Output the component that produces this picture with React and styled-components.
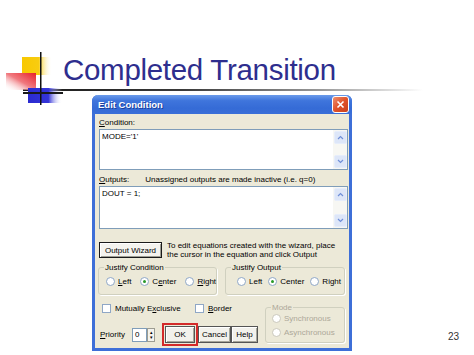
import React from 'react'
import styled, { createGlobalStyle } from 'styled-components'

const Global = createGlobalStyle`
  html, body { margin: 0; padding: 0; background: #fff; }
  body { width: 474px; height: 355px; overflow: hidden; }
`

const Slide = styled.div`
  position: relative;
  width: 474px;
  height: 355px;
  background: #fff;
  font-family: "Liberation Sans", Arial, sans-serif;
`

const Logo = styled.svg`
  position: absolute;
  left: 0;
  top: 48px;
`

const TitleRow = styled.div`
  padding: 51px 0 0 63px;
  height: 38px;
`

const Title = styled.h1`
  margin: 0;
  font-family: "Liberation Sans", Arial, sans-serif;
  font-weight: normal;
  font-size: 29.5px;
  letter-spacing: -0.3px;
  line-height: 38px;
  color: #2e2e8e;
`

const Rule = styled.div`
  margin-left: 23px;
  width: 400px;
  height: 2px;
  background: linear-gradient(to right, #1a1a1a 0%, #3a3a3a 40%, #9a9a9a 75%, rgba(255,255,255,0) 100%);
`

const Bottom = styled.div`
  display: flex;
  align-items: flex-end;
  margin-top: 4px;
`

const PageNum = styled.div`
  margin: 0 0 9px 96px;
  font-size: 10px;
  color: #333;
`

const Dialog = styled.div`
  margin-left: 92px;
  width: 260px;
  height: 256px;
  box-sizing: border-box;
  border: 3px solid #3e6fd8;
  border-top: none;
  border-radius: 6px 6px 0 0;
  background: #ece9d8;
  font-size: 8px;
  color: #000;
  display: flex;
  flex-direction: column;
`

const TitleBar = styled.div`
  height: 19px;
  margin: 0 -3px;
  border-radius: 6px 6px 0 0;
  background: linear-gradient(#6b9bea 0%, #3f75dc 30%, #356bd6 70%, #3a6fd8 100%);
  display: flex;
  align-items: center;
  justify-content: space-between;
  padding: 0 3px 0 6px;
`

const TitleText = styled.span`
  color: #fff;
  font-weight: bold;
  font-size: 9.5px;
  text-shadow: 1px 1px 0 #1c3f9a;
`

const CloseBtn = styled.div`
  width: 15px;
  height: 15px;
  border: 1px solid #fff;
  border-radius: 3px;
  background: linear-gradient(135deg, #ee9070, #e0522a 50%, #c8401c);
  display: flex;
  align-items: center;
  justify-content: center;
`

const Body = styled.div`
  padding: 4px 1px 0 4px;
  display: flex;
  flex-direction: column;
`

const Label = styled.div`
  height: 10px;
  line-height: 10px;
  margin-top: ${p => p.$mt || 0}px;
  white-space: nowrap;
  display: flex;
  gap: 16px;
`

const TextBox = styled.div`
  margin-top: 1px;
  height: ${p => p.$h}px;
  box-sizing: border-box;
  border: 1px solid #7f9db9;
  background: #fff;
  display: flex;
`

const TextContent = styled.div`
  flex: 1;
  padding: 2px 2px;
  font-size: 8px;
  line-height: 10px;
`

const ScrollBar = styled.div`
  width: 14px;
  background: #f7f7f3;
  display: flex;
  flex-direction: column;
  justify-content: space-between;
  padding: 1px 0;
`

const ScrollBtn = styled.div`
  width: 13px;
  height: 13px;
  margin-left: 1px;
  border-radius: 2px;
  background: #dde6f8;
  border: 1px solid #e6edfb;
  box-sizing: border-box;
  display: flex;
  align-items: center;
  justify-content: center;
`

const WizardRow = styled.div`
  margin-top: 12px;
  display: flex;
  align-items: center;
  gap: 5px;
`

const WizardBtn = styled.div`
  width: 63px;
  height: 16px;
  box-sizing: border-box;
  border: 1px solid #1a1a1a;
  box-shadow: inset 1px 1px 0 #fff, inset -1px -1px 0 #9d9d92;
  background: #f4f3ee;
  display: flex;
  align-items: center;
  justify-content: center;
  font-size: 8px;
`

const Hint = styled.div`
  line-height: 9px;
  font-size: 8px;
`

const Groups = styled.div`
  margin-top: 4px;
  display: grid;
  grid-template-columns: 119px 120px;
  gap: 8px;
  margin-left: -1px;
`

const Group = styled.fieldset`
  margin: 0;
  padding: 0 4px 2px 6px;
  height: ${p => p.$h || 32}px;
  width: ${p => (p.$w ? `${p.$w}px` : 'auto')};
  box-sizing: border-box;
  border: 1px solid #d0d0bf;
  border-radius: 3px;
  box-shadow: 1px 1px 0 #fff;
  min-width: 0;
`

const Legend = styled.legend`
  padding: 0 1px;
  margin-left: -1px;
  font-size: 8px;
  line-height: 9px;
  color: ${p => (p.$disabled ? '#aca899' : '#000')};
`

const RadioRow = styled.div`
  display: flex;
  justify-content: flex-start;
  gap: ${p => p.$gap || 9}px;
  align-items: center;
  height: 14px;
  margin-top: 2px;
  padding-left: ${p => p.$pad || 1}px;
`

const RadioCol = styled.div`
  display: flex;
  flex-direction: column;
  gap: 5px;
  padding-top: 2px;
`

const Option = styled.div`
  display: flex;
  align-items: center;
  gap: 3px;
  white-space: nowrap;
  color: ${p => (p.$disabled ? '#aca899' : '#000')};
`

const RadioDot = styled.span`
  width: 7px;
  height: 7px;
  border-radius: 50%;
  border: 1px solid ${p => (p.$disabled ? '#cac8bb' : '#8fa7c6')};
  background: #fff;
  display: flex;
  align-items: center;
  justify-content: center;
  &::after {
    content: '';
    width: 3px;
    height: 3px;
    border-radius: 50%;
    background: ${p => (p.$on ? '#2a9a2a' : 'transparent')};
  }
`

const Lower = styled.div`
  display: flex;
  margin-top: 8px;
`

const LeftCol = styled.div`
  width: 166px;
  display: flex;
  flex-direction: column;
`

const CheckRow = styled.div`
  display: flex;
  align-items: center;
  height: 11px;
  padding-left: 3px;
`

const CheckBox = styled.span`
  width: 9px;
  height: 9px;
  box-sizing: border-box;
  border: 1px solid #8fa7c6;
  background: #fff;
  margin-right: 4px;
`

const CheckItem = styled.div`
  display: flex;
  align-items: center;
  width: ${p => p.$w}px;
`

const PriorityRow = styled.div`
  margin-top: 9px;
  display: flex;
  align-items: center;
`

const PriorityLabel = styled.span`
  width: 32px;
  padding-left: 1px;
`

const NumBox = styled.div`
  width: 15px;
  height: 14px;
  box-sizing: border-box;
  border: 1px solid #7f9db9;
  background: #fff;
  padding-left: 2px;
  line-height: 12px;
`

const Spin = styled.div`
  width: 8px;
  height: 14px;
  box-sizing: border-box;
  border: 1px solid #9d9d92;
  background: #f4f3ee;
  display: flex;
  flex-direction: column;
  align-items: center;
  justify-content: center;
  font-size: 5px;
  line-height: 5px;
  margin-right: 7px;
`

const Highlight = styled.div`
  border: 2px solid #d32a2a;
  padding: 1px;
`

const Btn = styled.div`
  width: ${p => p.$w}px;
  height: 17px;
  box-sizing: border-box;
  border: 1px solid #555;
  box-shadow: inset 1px 1px 0 #fff, inset -1px -1px 0 #a6a69a;
  background: #f2f1ec;
  display: flex;
  align-items: center;
  justify-content: center;
  font-size: 8px;
`

const U = styled.span`
  text-decoration: underline;
`

const Arrow = ({ down }) => (
  <svg width="7" height="5" viewBox="0 0 7 5">
    <path d={down ? 'M1 1 L3.5 3.5 L6 1' : 'M1 4 L3.5 1.5 L6 4'} fill="none" stroke="#6f8fd8" strokeWidth="1.2" />
  </svg>
)

const Scroll = () => (
  <ScrollBar>
    <ScrollBtn><Arrow /></ScrollBtn>
    <ScrollBtn><Arrow down /></ScrollBtn>
  </ScrollBar>
)

const Radio = ({ on, disabled, children }) => (
  <Option $disabled={disabled}>
    <RadioDot $on={on} $disabled={disabled} />
    <span>{children}</span>
  </Option>
)

export default function App() {
  return (
    <>
      <Global />
      <Slide>
        <Logo width="100" height="62" viewBox="0 0 100 62">
          <defs>
            <linearGradient id="yel" x1="0" x2="1" y1="0" y2="0">
              <stop offset="0" stopColor="#f8c800" />
              <stop offset="0.55" stopColor="#f8cc10" />
              <stop offset="1" stopColor="#fff" stopOpacity="0" />
            </linearGradient>
            <linearGradient id="red" x1="1" x2="0" y1="0" y2="1">
              <stop offset="0" stopColor="#e8202a" />
              <stop offset="0.5" stopColor="#f07a80" />
              <stop offset="1" stopColor="#fff" stopOpacity="0" />
            </linearGradient>
            <linearGradient id="blu" x1="0" x2="1" y1="0" y2="0">
              <stop offset="0" stopColor="#2a2ad0" />
              <stop offset="0.6" stopColor="#3434d8" />
              <stop offset="1" stopColor="#fff" stopOpacity="0" />
            </linearGradient>
          </defs>
          <rect x="22" y="9" width="30" height="18" fill="url(#yel)" />
          <rect x="6" y="25" width="30" height="17" fill="url(#red)" />
          <rect x="28" y="40" width="34" height="15" fill="url(#blu)" />
          <rect x="40" y="4" width="1.5" height="53" fill="#111" />
          <rect x="23" y="44" width="40" height="2" fill="#1a1a1a" />
        </Logo>
        <TitleRow>
          <Title>Completed Transition</Title>
        </TitleRow>
        <Rule />
        <Bottom>
          <Dialog>
            <TitleBar>
              <TitleText>Edit Condition</TitleText>
              <CloseBtn>
                <svg width="9" height="9" viewBox="0 0 9 9">
                  <path d="M1.5 1.5 L7.5 7.5 M7.5 1.5 L1.5 7.5" stroke="#fff" strokeWidth="1.6" />
                </svg>
              </CloseBtn>
            </TitleBar>
            <Body>
              <Label><span><U>C</U>ondition:</span></Label>
              <TextBox $h={41}>
                <TextContent>MODE='1'</TextContent>
                <Scroll />
              </TextBox>
              <Label $mt={5}>
                <span><U>O</U>utputs:</span>
                <span>Unassigned outputs are made inactive (i.e. q=0)</span>
              </Label>
              <TextBox $h={43}>
                <TextContent>DOUT = 1;</TextContent>
                <Scroll />
              </TextBox>
              <WizardRow>
                <WizardBtn>Output Wizard</WizardBtn>
                <Hint>
                  To edit equations created with the wizard, place<br />
                  the cursor in the equation and click Output
                </Hint>
              </WizardRow>
              <Groups>
                <Group>
                  <Legend>Justify Condition</Legend>
                  <RadioRow>
                    <Radio><U>L</U>eft</Radio>
                    <Radio on>C<U>e</U>nter</Radio>
                    <Radio><U>R</U>ight</Radio>
                  </RadioRow>
                </Group>
                <Group>
                  <Legend>Justify Output</Legend>
                  <RadioRow $gap={6} $pad={5}>
                    <Radio>Left</Radio>
                    <Radio on>Center</Radio>
                    <Radio>Right</Radio>
                  </RadioRow>
                </Group>
              </Groups>
              <Lower>
                <LeftCol>
                  <CheckRow>
                    <CheckItem $w={93}><CheckBox />Mutually E<U>x</U>clusive</CheckItem>
                    <CheckItem $w={60}><CheckBox /><U>B</U>order</CheckItem>
                  </CheckRow>
                  <PriorityRow>
                    <PriorityLabel><U>P</U>riority</PriorityLabel>
                    <NumBox>0</NumBox>
                    <Spin><span>▴</span><span>▾</span></Spin>
                    <Highlight><Btn $w={30}>OK</Btn></Highlight>
                    <Btn $w={33}>Cancel</Btn>
                    <Btn $w={27}>Help</Btn>
                  </PriorityRow>
                </LeftCol>
                <Group $h={40} $w={80}>
                  <Legend $disabled>Mode</Legend>
                  <RadioCol>
                    <Radio disabled>Synchronous</Radio>
                    <Radio disabled>Asynchronous</Radio>
                  </RadioCol>
                </Group>
              </Lower>
            </Body>
          </Dialog>
          <PageNum>23</PageNum>
        </Bottom>
      </Slide>
    </>
  )
}
